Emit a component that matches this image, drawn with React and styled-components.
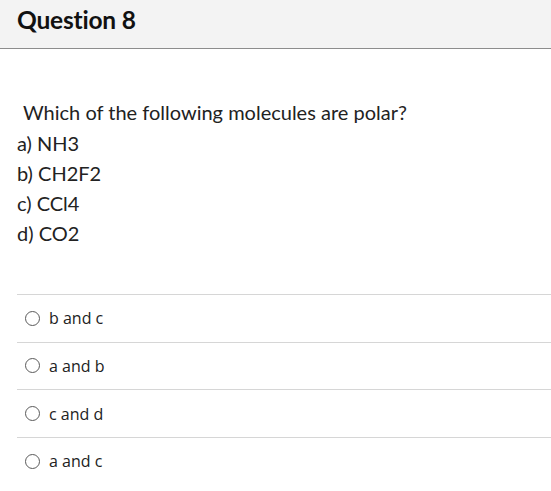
import styled, { createGlobalStyle } from "styled-components";

const GlobalStyle = createGlobalStyle`
  html, body {
    margin: 0;
    padding: 0;
    background: #ffffff;
  }
`;

const Page = styled.div`
  width: 551px;
  height: 491px;
  overflow: hidden;
  background: #ffffff;
  color: #1f1f1f;
`;

const Header = styled.header`
  height: 49px;
  background: #f3f3f3;
  border-bottom: 1px solid #8c8c8c;
  display: flex;
  align-items: center;
  padding-left: 17px;
  padding-bottom: 9px;
  box-sizing: border-box;
`;

const Title = styled.h2`
  margin: 0;
  font-family: Lato, "Liberation Sans", sans-serif;
  font-weight: 700;
  font-size: 24.5px;
  color: #111;
  letter-spacing: -0.2px;
`;

const Body = styled.div`
  padding: 50px 0 0 17px;
`;

const Prompt = styled.div`
  font-family: Lato, "Liberation Sans", sans-serif;
  font-size: 20px;
  color: #222;
`;

const Lead = styled.p`
  margin: 0 0 3px 6px;
  line-height: 26px;
`;

const Choice = styled.p`
  margin: 0;
  line-height: 30px;
`;

const Answers = styled.ul`
  list-style: none;
  margin: 46px 0 0;
  padding: 0;
`;

const Answer = styled.li`
  display: flex;
  align-items: center;
  gap: 9px;
  height: 47.67px;
  box-sizing: border-box;
  border-top: 1px solid #d6d6d6;
  padding-left: 8px;
  font-family: "Open Sans", "Liberation Sans", sans-serif;
  font-size: 16px;
  color: #222;
`;

const Radio = styled.span`
  width: 13px;
  height: 13px;
  border: 1.4px solid #5a5a5a;
  border-radius: 50%;
  flex: none;
`;

const options = ["b and c", "a and b", "c and d", "a and c"];

const App = () => {
  return (
    <Page>
      <GlobalStyle />
      <Header>
        <Title>Question 8</Title>
      </Header>
      <Body>
        <Prompt>
          <Lead>Which of the following molecules are polar?</Lead>
          <Choice>a) NH3</Choice>
          <Choice>b) CH2F2</Choice>
          <Choice>c) CCl4</Choice>
          <Choice>d) CO2</Choice>
        </Prompt>
        <Answers>
          {options.map((o) => (
            <Answer key={o}>
              <Radio />
              {o}
            </Answer>
          ))}
        </Answers>
      </Body>
    </Page>
  );
};

export default App;
